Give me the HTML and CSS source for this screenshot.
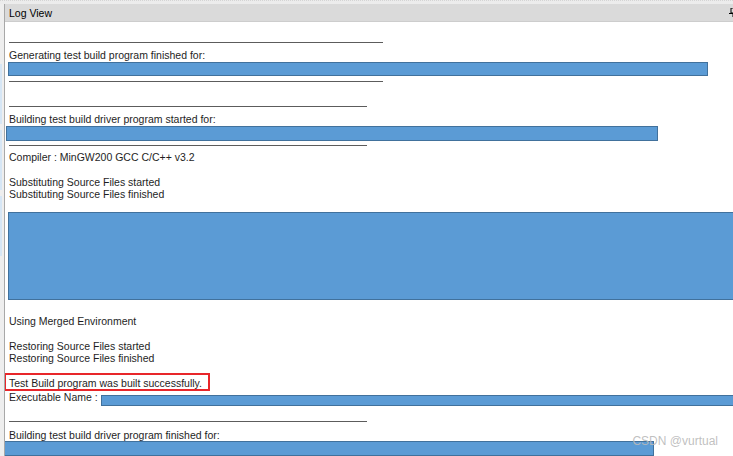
FILE: index.html
```html
<!DOCTYPE html>
<html lang="en">
<head>
  <meta charset="UTF-8">
  <title>Log View</title>
  <link rel="stylesheet" href="styles.css">
</head>
<body>
  <div class="frame">
    <div class="strip">
      <div class="tab"></div>
      <div class="tab"></div>
      <div class="tab"></div>
    </div>

    <div class="panel">
      <div class="title">
        <span>Log View</span>
        <svg class="pin" width="8" height="9" viewBox="0 0 8 9">
          <rect x="2" y="0" width="4" height="5" fill="none" stroke="#000" stroke-width="1"/>
          <line x1="0" y1="5.5" x2="8" y2="5.5" stroke="#000" stroke-width="1"/>
          <line x1="4" y1="6" x2="4" y2="9" stroke="#000" stroke-width="1"/>
        </svg>
      </div>

      <div class="log">
        <div class="rule rule-long first"></div>
        <div class="line gap-6">Generating test build program finished for:</div>
        <div class="bar bar-gen"></div>
        <div class="rule rule-long gap-5"></div>

        <div class="rule rule-short gap-24"></div>
        <div class="line gap-6">Building test build driver program started for:</div>
        <div class="bar bar-start"></div>
        <div class="rule rule-short gap-4"></div>

        <div class="line gap-5">Compiler : MinGW200 GCC C/C++ v3.2</div>
        <div class="line gap-13">Substituting Source Files started</div>
        <div class="line">Substituting Source Files finished</div>

        <div class="bar bar-block"></div>

        <div class="line gap-15">Using Merged Environment</div>
        <div class="line gap-13">Restoring Source Files started</div>
        <div class="line">Restoring Source Files finished</div>

        <div class="success">Test Build program was built successfully.</div>
        <div class="exe-row">
          <span class="line">Executable Name :</span>
          <div class="bar bar-exe"></div>
        </div>

        <div class="rule rule-short gap-15"></div>
        <div class="line gap-7">Building test build driver program finished for:</div>
        <div class="bar bar-end"></div>
      </div>

      <div class="watermark">CSDN @vurtual</div>
    </div>
  </div>
</body>
</html>
```

FILE: styles.css
```css
* {
  margin: 0;
  padding: 0;
  box-sizing: border-box;
}

html, body {
  width: 100%;
  height: 100%;
  overflow: hidden;
  background: #ececec;
  font-family: Tahoma, 'Liberation Sans', Arial, sans-serif;
  font-size: 10.5px;
  color: #1e1e1e;
}

.frame {
  display: flex;
  height: 100vh;
  padding-top: 3px;
  border-top: 1px dotted #d4d4d4;
}

.strip {
  width: 4px;
  display: flex;
  flex-direction: column;
  gap: 6px;
  padding-top: 60px;
  background: #eeeeee;
}

.tab {
  width: 2px;
  height: 60px;
  background: #d6e6f5;
}

.panel {
  flex: 1;
  position: relative;
  overflow: hidden;
  background: #fff;
  border-left: 1px solid #a8a8a8;
}

.title {
  height: 18px;
  display: flex;
  align-items: center;
  justify-content: space-between;
  padding-left: 4px;
  background: #dadada;
  border-bottom: 1px solid #cdcdcd;
  color: #000;
}

.pin {
  margin-right: -4px;
}

.log {
  padding-left: 4px;
}

.line {
  height: 12px;
  line-height: 12px;
  white-space: nowrap;
}

.rule {
  height: 1px;
  background: #5c5c5c;
}

.rule-long { width: 374px; }
.rule-short { width: 358px; }

.first { margin-top: 20px; }
.gap-4 { margin-top: 4px; }
.gap-5 { margin-top: 5px; }
.gap-6 { margin-top: 6px; }
.gap-7 { margin-top: 7px; }
.gap-13 { margin-top: 13px; }
.gap-15 { margin-top: 15px; }
.gap-24 { margin-top: 24px; }

.bar {
  background: #5b9bd5;
  border: 1px solid #41719c;
}

.bar-gen {
  margin-top: 1px;
  margin-left: -1px;
  width: 700px;
  height: 14px;
}

.bar-start {
  margin-top: 1px;
  margin-left: -3px;
  width: 652px;
  height: 15px;
}

.bar-block {
  margin-top: 12px;
  margin-left: -1px;
  width: 740px;
  height: 88px;
}

.success {
  display: block;
  width: 206px;
  height: 18px;
  margin-top: 9px;
  margin-left: -5px;
  padding: 2px 0 0 3px;
  line-height: 12px;
  white-space: nowrap;
  border: 2px solid #e8262a;
}

.exe-row {
  display: flex;
  align-items: flex-start;
  gap: 3px;
}

.bar-exe {
  flex: 1;
  margin-top: 4px;
  height: 11px;
  margin-right: -10px;
}

.bar-end {
  margin-top: 0;
  margin-left: -5px;
  width: 650px;
  height: 15px;
}

.watermark {
  position: absolute;
  right: 15px;
  bottom: 8px;
  font-family: 'Liberation Sans', Arial, sans-serif;
  font-size: 12px;
  color: rgba(185, 185, 185, 0.9);
}
```
